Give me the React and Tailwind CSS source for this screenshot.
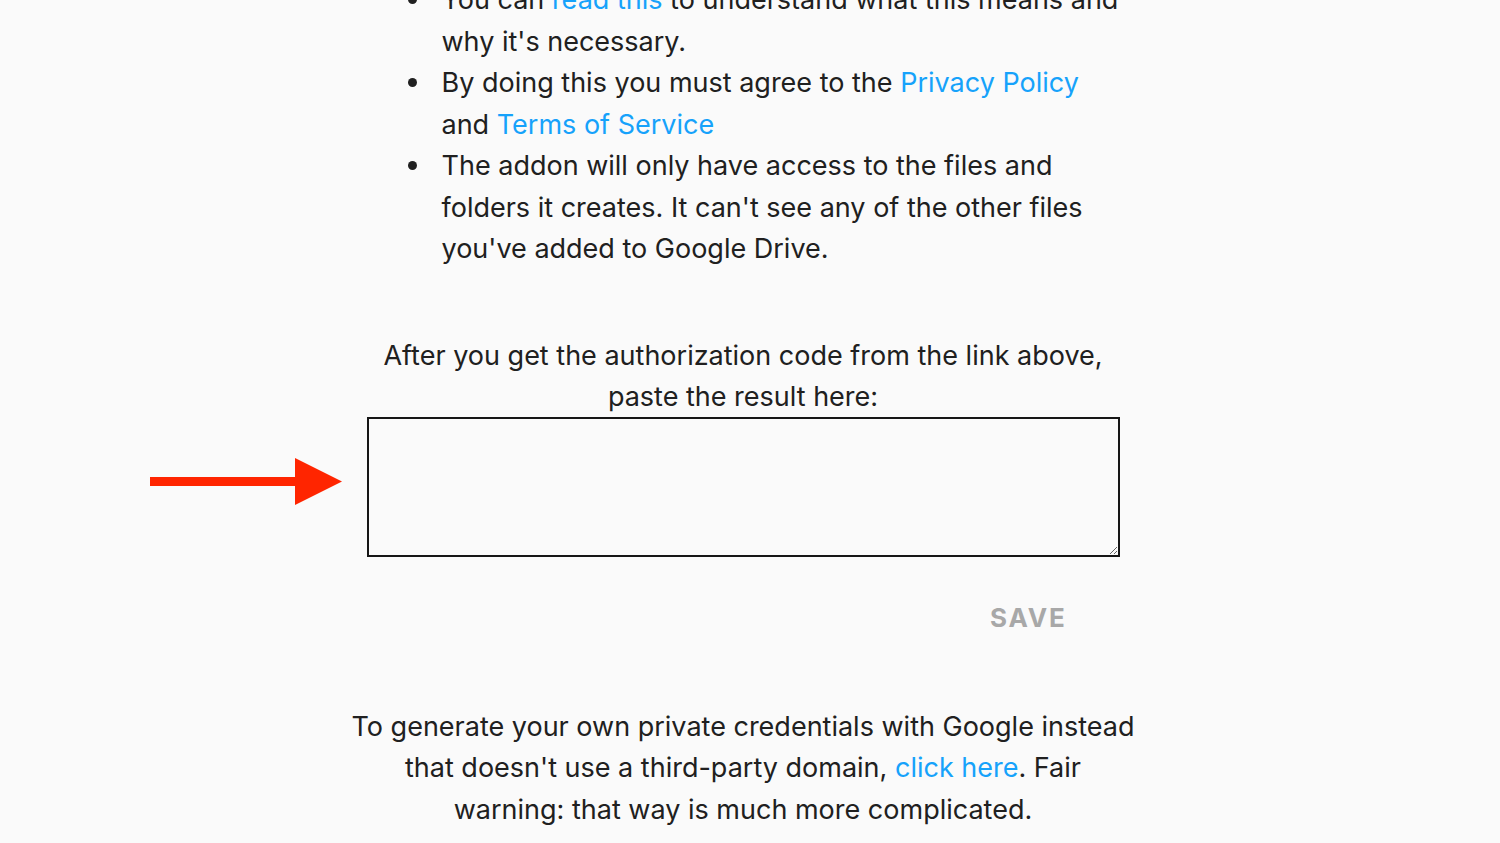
function Item({ children }) {
  return (
    <li className="flex">
      <span className="w-[43px] h-[41.5px] shrink-0 flex items-center pl-[9px]">
        <span className="w-[9px] h-[9px] rounded-full bg-[#202020]" />
      </span>
      <span>{children}</span>
    </li>
  );
}

export default function App() {
  const link = "text-[#16a2fb]";
  return (
    <div className="h-[843px] overflow-hidden bg-[#fafafa] text-[#202020] font-['Inter','Liberation_Sans',sans-serif] text-[27px] leading-[41.5px]">
      <div className="w-[1486px] flex flex-col items-center">
        <div className="w-[753px] -mt-[21px]">
          <ul className="pl-[32px] whitespace-nowrap">
            <Item>
              You can <span className={link}>read this</span> to understand what this means and
              <br />
              why it's necessary.
            </Item>
            <Item>
              By doing this you must agree to the <span className={link}>Privacy Policy</span>
              <br />
              and <span className={link}>Terms of Service</span>
            </Item>
            <Item>
              The addon will only have access to the files and
              <br />
              folders it creates. It can't see any of the other files
              <br />
              you've added to Google Drive.
            </Item>
          </ul>
          <p className="mt-[65px] text-center whitespace-nowrap">
            After you get the authorization code from the link above,
            <br />
            paste the result here:
          </p>
          <div className="relative -mt-px">
            <textarea className="block w-[753px] h-[140px] border-2 border-[#161616] bg-[#fafafa] outline-none resize" />
            <svg
              className="absolute left-[-217px] top-[41px]"
              width="192"
              height="48"
              viewBox="0 0 192 48"
            >
              <rect x="0" y="19" width="146" height="9" fill="#ff2500" />
              <polygon points="145,0 192,23.5 145,47" fill="#ff2500" />
            </svg>
          </div>
          <div className="flex justify-end pr-[53px] mt-[46px]">
            <span className="text-[26px] leading-[30px] font-bold tracking-[1.8px] text-[#a8a8a8]">SAVE</span>
          </div>
        </div>
        <p className="mt-[73px] text-center whitespace-nowrap">
          To generate your own private credentials with Google instead
          <br />
          that doesn't use a third-party domain, <span className={link}>click here</span>. Fair
          <br />
          warning: that way is much more complicated.
        </p>
      </div>
    </div>
  );
}
